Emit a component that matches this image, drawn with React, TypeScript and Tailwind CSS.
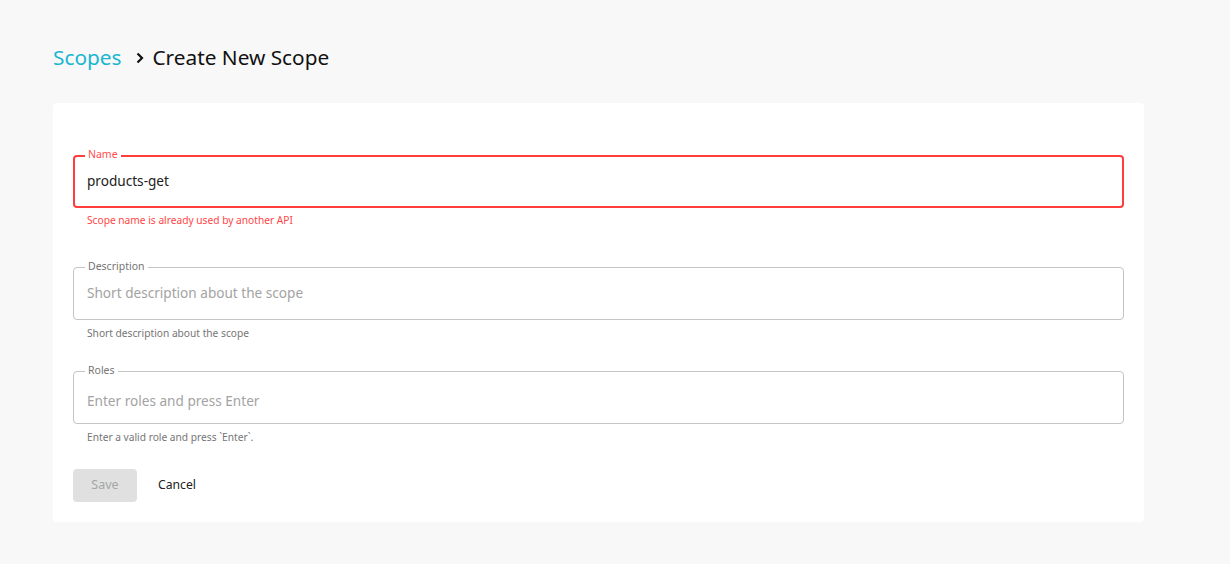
import React, { useState } from 'react';

type FieldProps = {
  label: string;
  value?: string;
  placeholder: string;
  helper: string;
  error?: boolean;
  chips?: boolean;
  className?: string;
};

function OutlinedField({ label, value, placeholder, helper, error, chips, className }: FieldProps) {
  const [text, setText] = useState(value ?? '');
  return (
    <div className={className}>
      <div
        className={
          'relative h-[53px] rounded-[4px] ' +
          (error ? 'border-2 border-[#ff3d3d]' : 'border border-[#c4c4c4]')
        }
      >
        <span
          className={
            'absolute px-[3px] bg-white text-[10.5px] leading-[12px] ' +
            (error ? '-top-[9px] left-[10px] text-[#ff4d4d]' : '-top-[8px] left-[11px] text-[#757575]')
          }
        >
          {label}
        </span>
        <input
          value={text}
          onChange={(e) => setText(e.target.value)}
          placeholder={placeholder}
          className={
            'w-full h-full bg-transparent outline-none text-[13.6px] text-[#212121] placeholder:text-[#a3a3a3] ' +
            (error ? 'px-[12px] pb-[2px]' : 'px-[13px] ') +
            (chips ? 'pt-[6px]' : error ? '' : 'pb-[2px]')
          }
        />
      </div>
      <p
        className={
          'pl-[14px] text-[10.2px] leading-[15px] ' +
          (error ? 'mt-[5px] text-[#ff4545]' : 'mt-[6px] text-[#757575]')
        }
      >
        {helper}
      </p>
    </div>
  );
}

export default function App() {
  return (
    <div
      className="min-h-[564px] bg-[#f8f8f8] px-[53px] pt-[40px]"
      style={{ fontFamily: '"Noto Sans", "Open Sans", sans-serif' }}
    >
      <div className="flex items-center h-[36px] text-[20.8px]">
        <a href="#" className="text-[#17b6d1]">Scopes</a>
        <svg width="8" height="12" viewBox="0 0 8 12" className="ml-[15px] mr-[8px]">
          <polyline points="1.5,1.5 6,6 1.5,10.5" fill="none" stroke="#111" strokeWidth="2.2" />
        </svg>
        <span className="text-[#111]">Create New Scope</span>
      </div>

      <div className="mt-[27px] w-[1091px] bg-white rounded-[4px] px-[20px] pt-[52px] pb-[20px]">
        <OutlinedField
          label="Name"
          value="products-get"
          placeholder=""
          helper="Scope name is already used by another API"
          error
        />
        <OutlinedField
          className="mt-[39px]"
          label="Description"
          placeholder="Short description about the scope"
          helper="Short description about the scope"
        />
        <OutlinedField
          className="mt-[30px]"
          label="Roles"
          placeholder="Enter roles and press Enter"
          helper="Enter a valid role and press `Enter`."
          chips
        />
        <div className="mt-[24px] flex items-center gap-[8px]">
          <button
            disabled
            className="w-[64px] h-[33px] rounded-[4px] bg-[#e0e0e0] text-[12.5px] text-[#a6a6a6]"
          >
            Save
          </button>
          <button className="px-[13px] h-[33px] text-[12.2px] text-[#212121]">Cancel</button>
        </div>
      </div>
    </div>
  );
}
